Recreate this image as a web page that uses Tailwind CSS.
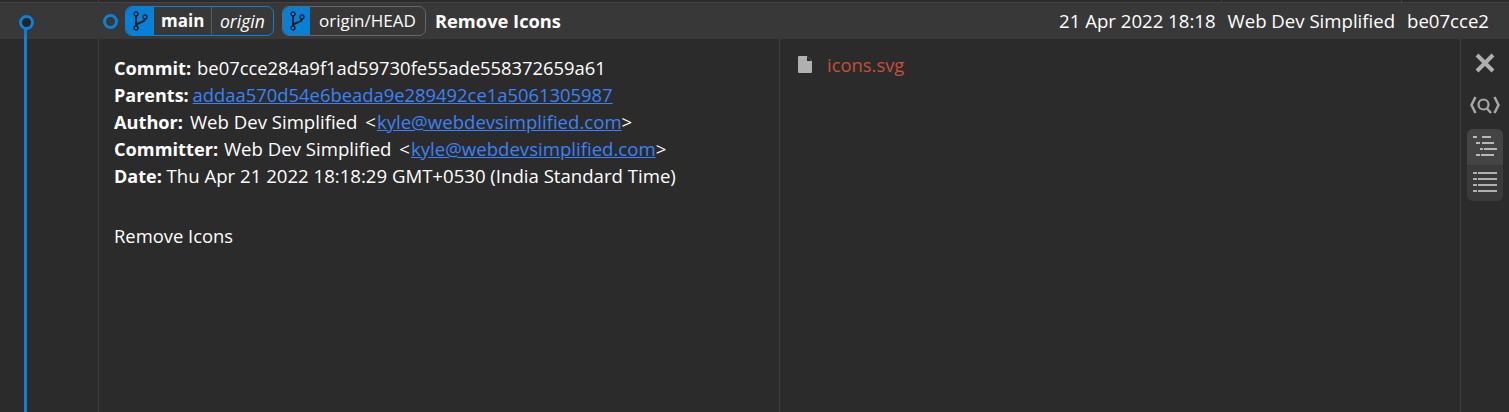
<!DOCTYPE html>
<html lang="en">
  <head>
    <meta charset="UTF-8" />
    <title>Git Graph</title>
    <script src="https://cdn.jsdelivr.net/npm/@tailwindcss/browser@4"></script>
  </head>
  <body class="bg-[#2b2b2b]">
    <div class="relative h-[412px] w-[1509px] overflow-hidden bg-[#2b2b2b] font-['Open_Sans',sans-serif] text-[18px] text-white">
      <!-- graph line + commit node -->
      <div class="absolute left-[24px] top-[22px] h-[390px] w-[3px] bg-[#0d7fd6]"></div>
      <div class="absolute left-[19px] top-[15px] h-[15px] w-[15px] rounded-full border-[3px] border-[#0d7fd6] bg-[#222]"></div>

      <!-- end of the previous row, with its column dividers -->
      <div class="flex h-[2px] bg-[#2a2a2a]">
        <div class="w-[99px] border-r border-[#444]"></div>
        <div class="w-[1123px] border-r border-[#444]"></div>
        <div class="w-[180px] border-r border-[#444]"></div>
      </div>

      <!-- commit row -->
      <div class="flex h-[37px] items-center border-t border-[#444] bg-[#383838] pr-[20px]">
        <div class="w-[103px] shrink-0"></div>
        <div class="h-[15px] w-[15px] shrink-0 rounded-full border-[3px] border-[#0d7fd6]"></div>
        <div class="ml-[7px] flex h-[30px] w-[149px] items-stretch overflow-hidden rounded-[7px] border border-[#0d7fd6]">
          <div class="flex w-[28px] items-center justify-center bg-[#0780d8]">
            <svg width="16" height="20" viewBox="0 0 16 20" fill="none" stroke="#1e1e1e" stroke-width="1.300"><circle cx="4" cy="3" r="2"/><circle cx="4" cy="17" r="2"/><circle cx="13" cy="6" r="2"/><path d="M4 5v10M13 8c0 4-9 3-9 7" stroke-width="2"/></svg>
          </div>
          <div class="flex w-[58px] items-center border-r border-[#5a5a5a] pl-[7px] text-[17px] font-bold">main</div>
          <div class="flex items-center pl-[8px] text-[17.500px] italic">origin</div>
        </div>
        <div class="ml-[8px] flex h-[30px] w-[144px] items-stretch overflow-hidden rounded-[7px] border border-[#666]">
          <div class="flex w-[27px] items-center justify-center bg-[#0780d8]">
            <svg width="16" height="20" viewBox="0 0 16 20" fill="none" stroke="#1e1e1e" stroke-width="1.300"><circle cx="4" cy="3" r="2"/><circle cx="4" cy="17" r="2"/><circle cx="13" cy="6" r="2"/><path d="M4 5v10M13 8c0 4-9 3-9 7" stroke-width="2"/></svg>
          </div>
          <div class="flex items-center pl-[9px] text-[17px]">origin/HEAD</div>
        </div>
        <div class="ml-[9px] text-[18.300px] font-bold">Remove Icons</div>
        <div class="ml-auto flex gap-[12px] text-[18.600px]">
          <span>21 Apr 2022 18:18</span>
          <span>Web Dev Simplified</span>
          <span>be07cce2</span>
        </div>
      </div>

      <!-- details pane -->
      <div class="ml-[98px] flex h-[373px] border-l border-[#3e3e3e]">
        <div class="w-[681px] shrink-0 border-r border-[#3e3e3e] pl-[15px] pt-[15px] text-[18.600px] leading-[27px]">
          <div><b class="text-[18.200px] leading-none">Commit:</b> <span class="ml-[1px] text-[18.400px] leading-none">be07cce284a9f1ad59730fe55ade558372659a61</span></div>
          <div><b class="text-[18px] leading-none">Parents:</b> <span class="-ml-[1px] text-[18.400px] leading-none text-[#3b82f6] underline">addaa570d54e6beada9e289492ce1a5061305987</span></div>
          <div><b class="text-[18.200px] leading-none">Author:</b> <span class="ml-[2px]">Web Dev Simplified</span> <span class="ml-[3px]">&lt;</span><span class="ml-[1px] text-[#3b82f6] underline">kyle@webdevsimplified.com</span>&gt;</div>
          <div><b class="text-[18.200px] leading-none">Committer:</b> <span class="ml-[1px]">Web Dev Simplified</span> <span class="ml-[3px]">&lt;</span><span class="ml-[1px] text-[#3b82f6] underline">kyle@webdevsimplified.com</span>&gt;</div>
          <div><b class="text-[18px] leading-none">Date:</b> Thu Apr 21 2022 18:18:29 GMT+0530 (India Standard Time)</div>
          <div class="mt-[33px] text-[18.400px]">Remove Icons</div>
        </div>
        <div class="flex w-[681px] shrink-0 items-start gap-[15px] border-r border-[#3e3e3e] pl-[18px] pt-[14px]">
          <svg class="mt-[3px]" width="14" height="17" viewBox="0 0 14 17"><path d="M1 0h8l5 5v11a1 1 0 0 1-1 1H1a1 1 0 0 1-1-1V1a1 1 0 0 1 1-1z" fill="#b0b0b0"/><path d="M9 0l5 5H9z" fill="#2b2b2b"/></svg>
          <span class="text-[18.400px] leading-[24px] text-[#c74e39]">icons.svg</span>
        </div>
        <div class="flex flex-1 flex-col items-center pt-[14px]">
          <svg width="20" height="20" viewBox="0 0 20 20" stroke="#b0b0b0" stroke-width="4"><path d="M2 2l16 16M18 2L2 18"/></svg>
          <svg class="mt-[23px]" width="30" height="18" viewBox="0 0 30 18" fill="none" stroke="#a8a8a8" stroke-width="2.500"><path d="M5.500 1L1.500 9l4 8M24.500 1l4 8-4 8"/><circle cx="13.500" cy="8.500" r="5" stroke-width="2.200"/><path d="M17 12.500l4 4.500" stroke-width="2.500"/></svg>
          <div class="mt-[15px] flex w-[36px] flex-col overflow-hidden rounded-[6px] bg-[#3a3a3a]">
            <div class="flex h-[36px] items-center justify-center bg-[#444]">
              <svg class="mb-[2px]" width="24" height="20" viewBox="0 0 24 20" stroke="#b8b8b8" stroke-width="2"><path d="M0 1h4M9 1h9M3 7h4M9 7h12M7 13h3M11 13h13M3 19h4M8 19h13"/></svg>
            </div>
            <div class="flex h-[36px] items-center justify-center">
              <svg class="mb-[2px]" width="24" height="20" viewBox="0 0 24 20" stroke="#b0b0b0" stroke-width="2"><path d="M0 1h4M5 1h19M0 7h4M5 7h19M0 13h4M5 13h19M0 19h4M5 19h19"/></svg>
            </div>
          </div>
        </div>
      </div>
    </div>
  </body>
</html>
